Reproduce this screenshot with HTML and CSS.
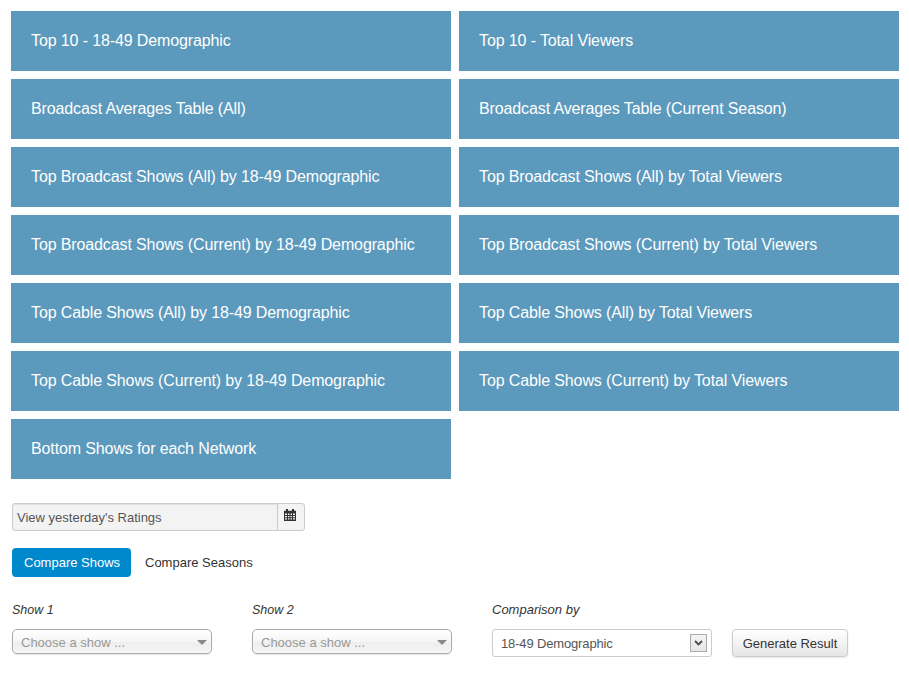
FILE: index.html
```html
<!DOCTYPE html>
<html lang="en">
<head>
<meta charset="utf-8">
<title>Ratings</title>
<link rel="stylesheet" href="styles.css">
</head>
<body>
<div class="tiles">
  <a class="tile">Top 10 - 18-49 Demographic</a>
  <a class="tile">Top 10 - Total Viewers</a>
  <a class="tile">Broadcast Averages Table (All)</a>
  <a class="tile">Broadcast Averages Table (Current Season)</a>
  <a class="tile">Top Broadcast Shows (All) by 18-49 Demographic</a>
  <a class="tile">Top Broadcast Shows (All) by Total Viewers</a>
  <a class="tile">Top Broadcast Shows (Current) by 18-49 Demographic</a>
  <a class="tile">Top Broadcast Shows (Current) by Total Viewers</a>
  <a class="tile">Top Cable Shows (All) by 18-49 Demographic</a>
  <a class="tile">Top Cable Shows (All) by Total Viewers</a>
  <a class="tile">Top Cable Shows (Current) by 18-49 Demographic</a>
  <a class="tile">Top Cable Shows (Current) by Total Viewers</a>
  <a class="tile">Bottom Shows for each Network</a>
</div>
<div class="lower">
<div class="date-group">
  <div class="date-input">View yesterday's Ratings</div>
  <div class="date-addon">
    <svg class="cal" width="12" height="12" viewBox="0 0 12 13" preserveAspectRatio="none"><path fill="#333" fill-rule="evenodd" d="M2 0h2v2h4V0h2v2h2v11H0V2h2zM1 5v1.500h2V5zm3 0v1.500h1.500V5zm2.500 0v1.500H8V5zM9 5v1.500h2V5zM1 7.500V9h2V7.500zm3 0V9h1.500V7.500zm2.500 0V9H8V7.500zm2.500 0V9h2V7.500zM1 10v1.500h2V10zm3 0v1.500h1.500V10zm2.500 0v1.500H8V10zM9 10v1.500h2V10z"/></svg>
  </div>
</div>
<div class="tabs">
  <span class="tab active">Compare Shows</span>
  <span class="tab">Compare Seasons</span>
</div>
<div class="form-row">
  <div class="field f1">
    <label class="lbl">Show 1</label>
    <div class="chosen">Choose a show ...<span class="caret"></span></div>
  </div>
  <div class="field f2">
    <label class="lbl">Show 2</label>
    <div class="chosen">Choose a show ...<span class="caret"></span></div>
  </div>
  <div class="field f3">
    <label class="lbl lbl-wide">Comparison by</label>
    <div class="select">18-49 Demographic
      <span class="sel-btn"><svg width="9" height="6" viewBox="0 0 9 6"><path d="M1 1l3.500 3.500L8 1" fill="none" stroke="#4d4d4d" stroke-width="1.800"/></svg></span>
    </div>
  </div>
  <button class="gen" type="button">Generate Result</button>
</div>
</div>
</body>
</html>
```
FILE: styles.css
```css
* { box-sizing: border-box; }
html, body { margin: 0; padding: 0; background: #fff; }
body {
  font-family: "Liberation Sans", Arial, sans-serif;
  font-size: 13px;
  color: #333;
  padding: 11px 10px 0 11px;
  height: 677px;
  overflow: hidden;
}
.tiles {
  display: grid;
  grid-template-columns: 440px 440px;
  grid-auto-rows: 60px;
  column-gap: 8px;
  row-gap: 8px;
}
.tile {
  background: #5b99bd;
  color: #fff;
  font-size: 16px;
  line-height: 60px;
  padding-left: 20px;
  white-space: nowrap;
  letter-spacing: -.12px;
}
.lower { padding-left: 1px; }
.date-group {
  display: flex;
  width: 293px;
  height: 28px;
  margin-top: 24px;
}
.date-input {
  flex: 1;
  background: #f3f3f3;
  border: 1px solid #ccc;
  border-radius: 3px 0 0 3px;
  box-shadow: inset 0 1px 1px rgba(0,0,0,.08);
  color: #555;
  line-height: 28px;
  padding-left: 4px;
}
.date-addon {
  width: 28px;
  background: #f3f3f3;
  border: 1px solid #ccc;
  margin-left: -1px;
  border-radius: 0 3px 3px 0;
  display: flex;
  justify-content: center;
  padding: 5px 2px 0 0;
}
.cal { display: block; }
.tabs {
  display: flex;
  margin-top: 17px;
  align-items: center;
}
.tab {
  height: 29px;
  line-height: 29px;
  padding: 0 14px;
  border-radius: 4px;
  color: #333;
  white-space: nowrap;
}
.tab.active { background: #0088cc; color: #fff; padding: 0 12px; width: 119px; }
.form-row {
  display: flex;
  align-items: flex-start;
  margin-top: 25px;
}
.field { display: flex; flex-direction: column; }
.f1, .f2, .f3 { width: 240px; }
.lbl {
  font-style: italic;
  font-size: 12.500px;
  line-height: 14px;
  color: #333;
  height: 14px;
  position: relative;
  top: 1px;
}
.lbl-wide { font-size: 13px; }
.chosen {
  position: relative;
  width: 200px;
  height: 25px;
  margin-top: 13px;
  border: 1px solid #aaa;
  border-radius: 5px;
  background: linear-gradient(#fff 0%, #f6f6f6 50%, #eee 52%, #f4f4f4 100%);
  box-shadow: 0 0 3px #fff inset, 0 1px 1px rgba(0,0,0,.1);
  color: #999;
  line-height: 25px;
  padding-left: 8px;
}
.caret {
  position: absolute;
  right: 4px;
  top: 10px;
  border-left: 5px solid transparent;
  border-right: 5px solid transparent;
  border-top: 5px solid #888;
}
.select {
  position: relative;
  width: 220px;
  height: 28px;
  margin-top: 13px;
  border: 1px solid #ccc;
  border-radius: 3px;
  color: #555;
  line-height: 28px;
  padding-left: 8px;
  letter-spacing: -.15px;
}
.sel-btn {
  position: absolute;
  right: 4px;
  top: 4px;
  width: 17px;
  height: 18px;
  border: 1px solid #aaa;
  background: linear-gradient(#f4f4f4, #e6e6e6);
  display: flex;
  align-items: center;
  justify-content: center;
}
.gen {
  width: 116px;
  height: 28px;
  margin-top: 27px;
  border: 1px solid #ccc;
  border-radius: 4px;
  background: linear-gradient(#fff, #e6e6e6);
  box-shadow: 0 1px 2px rgba(0,0,0,.1);
  color: #333;
  font-family: "Liberation Sans", Arial, sans-serif;
  font-size: 13px;
  padding: 0;
}
```
